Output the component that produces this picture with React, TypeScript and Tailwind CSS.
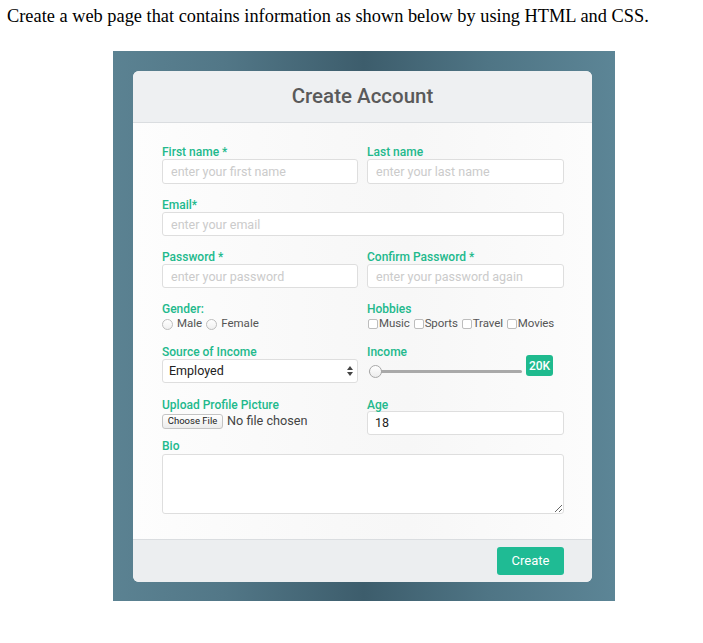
const font = { fontFamily: "Roboto, 'Liberation Sans', sans-serif" };

function Label({ children }: { children: React.ReactNode }) {
  return (
    <div className="h-[13px] text-[12px] leading-[13px] font-medium text-[#22b98c]">
      {children}
    </div>
  );
}

function TextInput({ placeholder, h = "h-[25px]" }: { placeholder: string; h?: string }) {
  return (
    <input
      readOnly
      placeholder={placeholder}
      className={`block w-full ${h} rounded-[3px] border border-[#dedede] bg-white px-[8px] text-[12.5px] text-[#333] outline-none placeholder:text-[#cbcbcb]`}
    />
  );
}

function Radio({ label }: { label: string }) {
  return (
    <span className="flex items-center gap-[4px]">
      <span className="h-[11px] w-[11px] rounded-full border border-[#bdbdbd] bg-gradient-to-b from-white to-[#f0f0f0]" />
      <span>{label}</span>
    </span>
  );
}

function Check({ label }: { label: string }) {
  return (
    <span className="flex items-center gap-[1px]">
      <span className="h-[10px] w-[10px] rounded-[2px] border border-[#bdbdbd] bg-white" />
      <span>{label}</span>
    </span>
  );
}

export default function App() {
  return (
    <div className="min-h-[643px] bg-white">
      <p
        className="pl-[7px] pt-[5px] text-[18.35px] leading-[22px] text-black"
        style={{ fontFamily: "'Liberation Serif', 'Times New Roman', serif" }}
      >
        Create a web page that contains information as shown below by using HTML and CSS.
      </p>

      <div className="ml-[113px] mt-[24px] h-[550px] w-[502px] bg-[linear-gradient(90deg,#5b8292_0%,#527787_22%,#3d5d6c_50%,#4f7585_75%,#5c8596_100%)] pl-[20px] pt-[20px]">
        <div
          className="flex h-[511px] w-[459px] flex-col overflow-hidden rounded-[6px] bg-[#fafafa]"
          style={font}
        >
          <div className="flex h-[52px] items-center justify-center border-b border-[#dadde0] bg-[#eef0f2]">
            <h1 className="text-[20.5px] font-medium text-[#5a5a5a]">Create Account</h1>
          </div>

          <div className="flex-1 bg-[linear-gradient(90deg,#fdfdfd,#f8f8f8_45%,#f7f7f7_60%,#fcfcfc)] pl-[29px] pr-[28px] pt-[23px]">
            <div className="grid grid-cols-[196px_197px] gap-x-[9px]">
              <div>
                <Label>First name *</Label>
                <TextInput placeholder="enter your first name" />
              </div>
              <div>
                <Label>Last name</Label>
                <TextInput placeholder="enter your last name" />
              </div>
            </div>

            <div className="mt-[15px]">
              <Label>Email*</Label>
              <TextInput placeholder="enter your email" h="h-[24px]" />
            </div>

            <div className="mt-[15px] grid grid-cols-[196px_197px] gap-x-[9px]">
              <div>
                <Label>Password *</Label>
                <TextInput placeholder="enter your password" h="h-[24px]" />
              </div>
              <div>
                <Label>Confirm Password *</Label>
                <TextInput placeholder="enter your password again" h="h-[24px]" />
              </div>
            </div>

            <div className="mt-[15px] grid grid-cols-[196px_197px] gap-x-[9px]">
              <div>
                <Label>Gender:</Label>
                <div className="mt-[1px] flex h-[14px] items-center gap-[4px] text-[11.5px] text-[#555]">
                  <Radio label="Male" />
                  <Radio label="Female" />
                </div>
              </div>
              <div>
                <Label>Hobbies</Label>
                <div className="mt-[1px] flex h-[14px] items-center gap-[4px] pl-[1px] text-[11.5px] tracking-[-0.1px] text-[#555]">
                  <Check label="Music" />
                  <Check label="Sports" />
                  <Check label="Travel" />
                  <Check label="Movies" />
                </div>
              </div>
            </div>

            <div className="mt-[15px] grid grid-cols-[196px_197px] gap-x-[9px]">
              <div>
                <Label>Source of Income</Label>
                <div className="flex h-[24px] items-center justify-between rounded-[3px] border border-[#dedede] bg-white pl-[6px] pr-[4px] text-[12.5px] text-[#222]">
                  <span>Employed</span>
                  <svg width="6" height="10" viewBox="0 0 6 10">
                    <path d="M3 0 L6 4 L0 4 Z" fill="#444" />
                    <path d="M0 6 L6 6 L3 10 Z" fill="#444" />
                  </svg>
                </div>
              </div>
              <div>
                <Label>Income</Label>
                <div className="flex h-[24px] items-start">
                  <div className="relative mt-[11px] ml-[2px] h-[3px] w-[153px] rounded-full bg-[#a9a9a9]">
                    <span className="absolute -top-[5px] left-0 h-[13px] w-[13px] rounded-full border border-[#a8a8a8] bg-gradient-to-b from-white to-[#ececec]" />
                  </div>
                  <span className="-mt-[4px] ml-[4px] flex h-[21px] w-[27px] items-center justify-center rounded-[3px] bg-[#1fba8e] text-[12px] font-medium text-white">
                    20K
                  </span>
                </div>
              </div>
            </div>

            <div className="mt-[16px] grid grid-cols-[196px_197px] gap-x-[9px]">
              <div>
                <Label>Upload Profile Picture</Label>
                <div className="mt-[1px] flex items-center gap-[4px]">
                  <span className="flex h-[15px] w-[61px] items-center justify-center rounded-[3px] border border-[#c4c4c4] bg-gradient-to-b from-white to-[#ececec] text-[9.5px] text-[#222]">
                    Choose File
                  </span>
                  <span className="-mt-[2px] text-[12.7px] text-[#444]">No file chosen</span>
                </div>
              </div>
              <div>
                <Label>Age</Label>
                <div className="-mt-[1px] flex h-[24px] items-center rounded-[3px] border border-[#dedede] bg-white pl-[7px] text-[12.5px] text-[#222]">
                  18
                </div>
              </div>
            </div>

            <div className="mt-[5px]">
              <Label>Bio</Label>
              <textarea
                readOnly
                className="mt-[1px] block h-[60px] w-full rounded-[3px] border border-[#dedede] bg-white outline-none"
              />
            </div>
          </div>

          <div className="flex h-[43px] items-start justify-end border-t border-[#dadde0] bg-[#eceef0] pr-[28px] pt-[7px]">
            <button className="flex h-[28px] w-[67px] items-center justify-center rounded-[3px] bg-[#1fbb94] text-[13px] text-white">
              Create
            </button>
          </div>
        </div>
      </div>
    </div>
  );
}
